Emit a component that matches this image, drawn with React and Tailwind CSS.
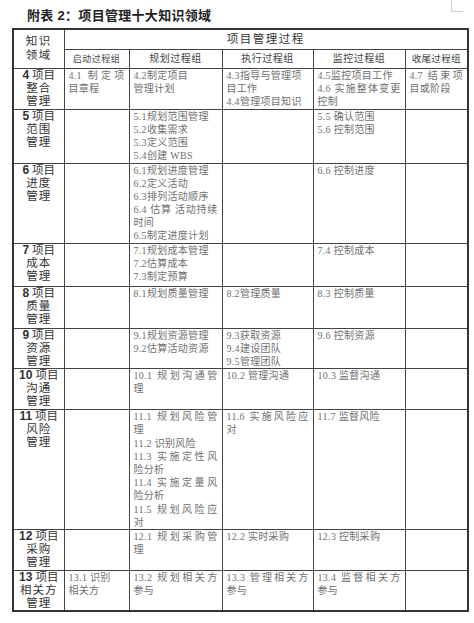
import React from 'react';

const J = true;

// each row: number, name lines, height, five process-group cells (array of lines)
const rows = [
    {
        n: '4', name: ['整合', '管理'], h: 41,
        cells: [
            [{ t: '4.1 制定项', j: J }, '目章程'],
            ['4.2制定项目', '管理计划'],
            ['4.3指导与管理项', '目工作', '4.4管理项目知识'],
            ['4.5监控项目工作', { t: '4.6 实施整体变更', j: J }, '控制'],
            [{ t: '4.7 结束项', j: J }, '目或阶段'],
        ],
    },
    {
        n: '5', name: ['范围', '管理'], h: 54,
        cells: [[], ['5.1规划范围管理', '5.2收集需求', '5.3定义范围', '5.4创建 WBS'], [], ['5.5 确认范围', '5.6 控制范围'], []],
    },
    {
        n: '6', name: ['进度', '管理'], h: 80,
        cells: [
            [],
            ['6.1规划进度管理', '6.2定义活动', '6.3排列活动顺序', { t: '6.4 估算 活动持续', j: J }, '时间', '6.5制定进度计划'],
            [],
            ['6.6 控制进度'],
            [],
        ],
    },
    {
        n: '7', name: ['成本', '管理'], h: 43,
        cells: [[], ['7.1规划成本管理', '7.2估算成本', '7.3制定预算'], [], ['7.4 控制成本'], []],
    },
    {
        n: '8', name: ['质量', '管理'], h: 42,
        cells: [[], ['8.1规划质量管理'], ['8.2管理质量'], ['8.3 控制质量'], []],
    },
    {
        n: '9', name: ['资源', '管理'], h: 40,
        cells: [[], ['9.1规划资源管理', '9.2估算活动资源'], ['9.3获取资源', '9.4建设团队', '9.5管理团队'], ['9.6 控制资源'], []],
    },
    {
        n: '10', name: ['沟通', '管理'], h: 41,
        cells: [[], [{ t: '10.1 规划沟通管', j: J }, '理'], ['10.2 管理沟通'], ['10.3 监督沟通'], []],
    },
    {
        n: '11', name: ['风险', '管理'], h: 120,
        cells: [
            [],
            [
                { t: '11.1 规划风险管', j: J }, '理', '11.2 识别风险',
                { t: '11.3 实施定性风', j: J }, '险分析',
                { t: '11.4 实施定量风', j: J }, '险分析',
                { t: '11.5 规划风险应', j: J }, '对',
            ],
            [{ t: '11.6 实施风险应', j: J }, '对'],
            ['11.7 监督风险'],
            [],
        ],
    },
    {
        n: '12', name: ['采购', '管理'], h: 41,
        cells: [[], [{ t: '12.1 规划采购管', j: J }, '理'], ['12.2 实时采购'], ['12.3 控制采购'], []],
    },
    {
        n: '13', name: ['相关方', '管理'], h: 40,
        cells: [
            ['13.1 识别', '相关方'],
            [{ t: '13.2 规划相关方', j: J }, '参与'],
            [{ t: '13.3 管理相关方', j: J }, '参与'],
            [{ t: '13.4 监督相关方', j: J }, '参与'],
            [],
        ],
    },
];

const serif = 'font-["Liberation_Serif","Noto_Sans_CJK_SC",serif]';

const Line = ({ line }) => {
    if (typeof line === 'string') {
        return <div className="h-[13.2px] whitespace-nowrap">{line}</div>;
    }
    return <div className="h-[13.2px] whitespace-nowrap text-justify [text-align-last:justify]">{line.t}</div>;
};

const App = () => {
    return (
        <div className={`relative w-[474px] h-[623px] bg-white overflow-hidden ${serif}`}>
            {/* page corner mark */}
            <div className="absolute right-[11px] top-0 w-[12px] h-[12px] border-l border-b border-[#cfcfcf]" />

            <div className="pl-[27px] pt-[8px] h-[28px] text-[13px] leading-[16px] font-bold text-[#222] tracking-[0.3px] font-['Liberation_Sans','Noto_Sans_CJK_SC',sans-serif]">
                附表 2：项目管理十大知识领域
            </div>

            <table className="ml-[12px] w-[455px] table-fixed border-collapse border-2 border-[#333]">
                <colgroup>
                    <col className="w-[51px]" />
                    <col className="w-[65px]" />
                    <col className="w-[93px]" />
                    <col className="w-[91px]" />
                    <col className="w-[92px]" />
                    <col className="w-[63px]" />
                </colgroup>
                <thead>
                    <tr className="h-[20px]">
                        <td rowSpan={2} className="border border-[#444] text-center align-middle text-[11.5px] leading-[13.5px] text-[#333] tracking-[1.5px]">
                            <div className="h-[13.5px]">知识</div>
                            <div className="h-[13.5px]">领域</div>
                        </td>
                        <td colSpan={5} className="border border-[#444] text-center text-[11.5px] leading-[14px] text-[#333] tracking-[1.5px]">
                            项目管理过程
                        </td>
                    </tr>
                    <tr className="h-[19px] text-[#444] leading-[12px]">
                        <td className="border border-[#444] text-center text-[9px] tracking-[0.5px]">启动过程组</td>
                        <td className="border border-[#444] text-center text-[10px] tracking-[0.5px]">规划过程组</td>
                        <td className="border border-[#444] text-center text-[10px] tracking-[0.5px]">执行过程组</td>
                        <td className="border border-[#444] text-center text-[10px] tracking-[0.5px]">监控过程组</td>
                        <td className="border border-[#444] text-center text-[9.5px] tracking-[0.3px]">收尾过程组</td>
                    </tr>
                </thead>
                <tbody>
                    {rows.map((row) => (
                        <tr key={row.n} style={{ height: row.h }}>
                            <td className="border border-[#444] align-top text-center text-[11.5px] leading-[13px] text-[#333]">
                                <div className="h-[13px] whitespace-nowrap">
                                    <span className="font-['Liberation_Sans',sans-serif] font-bold text-[12px] leading-[13px]">{row.n}</span>
                                    <span className="ml-[3px]">项目</span>
                                </div>
                                {row.name.map((nm) => (
                                    <div key={nm} className="h-[13px] tracking-[1px]">{nm}</div>
                                ))}
                            </td>
                            {row.cells.map((lines, i) => (
                                <td
                                    key={i}
                                    className="border border-[#444] align-top px-[4px] text-[10px] leading-[13.2px] text-[#707070] tracking-[0.3px]"
                                >
                                    {lines.map((ln, k) => (
                                        <Line key={k} line={ln} />
                                    ))}
                                </td>
                            ))}
                        </tr>
                    ))}
                </tbody>
            </table>
        </div>
    );
};

export default App;
